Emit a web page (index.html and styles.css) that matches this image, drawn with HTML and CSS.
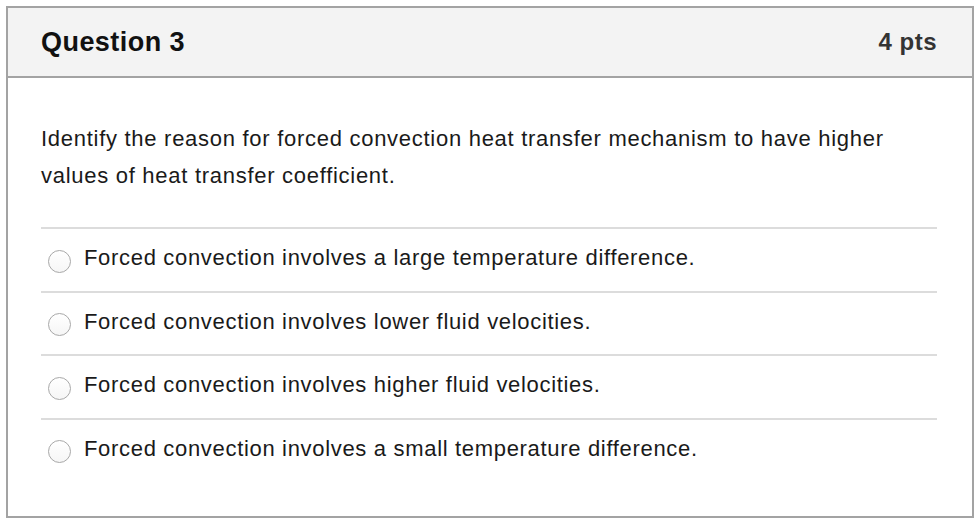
FILE: index.html
```html
<!DOCTYPE html>
<html lang="en">
<head>
<meta charset="utf-8">
<title>Question 3</title>
<link rel="stylesheet" href="styles.css">
</head>
<body>
<div class="card">
  <div class="card-header">
    <span class="q-title">Question 3</span>
    <span class="q-pts">4 pts</span>
  </div>
  <div class="card-body">
    <p class="q-text">Identify the reason for forced convection heat transfer mechanism to have higher values of heat transfer coefficient.</p>
    <div class="answers">
      <label class="answer"><span class="radio"></span><span class="answer-text">Forced convection involves a large temperature difference.</span></label>
      <label class="answer"><span class="radio"></span><span class="answer-text">Forced convection involves lower fluid velocities.</span></label>
      <label class="answer"><span class="radio"></span><span class="answer-text">Forced convection involves higher fluid velocities.</span></label>
      <label class="answer"><span class="radio"></span><span class="answer-text">Forced convection involves a small temperature difference.</span></label>
    </div>
  </div>
</div>
</body>
</html>
```

FILE: styles.css
```css
* { box-sizing: border-box; }
html, body { margin: 0; background: #ffffff; }
body {
  padding: 6px 0 0 6px;
  font-family: "Liberation Sans", Arial, Helvetica, sans-serif;
  color: #111;
}
.card {
  width: 968px;
  height: 512px;
  border: 2px solid #a3a3a3;
  background: #fff;
}
.card-header {
  height: 70px;
  background: #f3f3f3;
  border-bottom: 2px solid #a3a3a3;
  display: flex;
  align-items: center;
  justify-content: space-between;
  padding: 0 35px 0 33px;
}
.q-title {
  font-weight: bold;
  font-size: 27px;
  letter-spacing: 0.45px;
  color: #111;
}
.q-pts {
  font-weight: bold;
  font-size: 24px;
  letter-spacing: 0.5px;
  color: #333;
}
.card-body {
  padding: 42px 35px 0 33px;
}
.q-text {
  margin: 0 0 33px 0;
  font-size: 22px;
  line-height: 37px;
  letter-spacing: 0.72px;
  color: #1a1a1a;
}
.answers {
  display: flex;
  flex-direction: column;
}
.answer {
  display: flex;
  align-items: center;
  height: 63.5px;
  border-top: 2px solid #dcdcdc;
  padding-left: 7px;
  font-size: 22px;
  letter-spacing: 0.68px;
  color: #1a1a1a;
}
.answer-text {
  margin-top: -3px;
}
.radio {
  width: 23px;
  height: 23px;
  border-radius: 50%;
  border: 1.5px solid #a8a8a8;
  background: linear-gradient(#ffffff, #f6f6f6);
  margin: 3px 13px 0 0;
  flex: none;
}
```
